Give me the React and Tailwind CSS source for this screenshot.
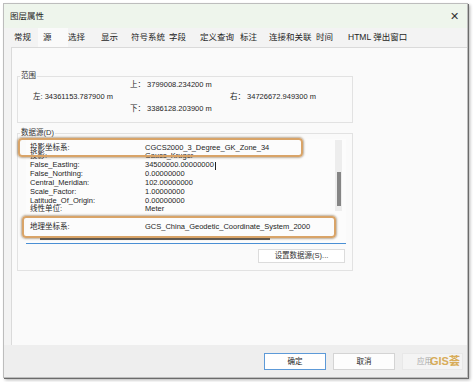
import React from 'react'

export default function App() {
  const tabs = [
    ['常规', 29],
    ['源', 30],
    ['选择', 33],
    ['显示', 30],
    ['符号系统', 38],
    ['字段', 31],
    ['定义查询', 40],
    ['标注', 29],
    ['连接和关联', 47],
    ['时间', 32],
    ['HTML 弹出窗口', 90],
  ]

  const rows = [
    ['投影坐标系:', 'CGCS2000_3_Degree_GK_Zone_34'],
    ['投影:', 'Gauss_Kruger'],
    ['False_Easting:', '34500000.00000000', true],
    ['False_Northing:', '0.00000000'],
    ['Central_Meridian:', '102.00000000'],
    ['Scale_Factor:', '1.00000000'],
    ['Latitude_Of_Origin:', '0.00000000'],
    ['线性单位:', 'Meter'],
    ['', ''],
    ['地理坐标系:', 'GCS_China_Geodetic_Coordinate_System_2000'],
  ]

  return (
    <div
      className="relative w-[474px] h-[382px] overflow-hidden bg-white text-[#1e1e1e]"
      style={{ fontFamily: '"Liberation Sans", "Noto Sans CJK SC", sans-serif' }}
    >
      <div className="ml-[3px] mt-[3px] flex h-[375px] w-[465px] flex-col border border-[#bdbdbd] bg-[#f3f3f3] shadow-[1px_1px_0_#6b6b6b,2px_2px_3px_rgba(0,0,0,0.3)]">
        {/* title bar */}
        <div className="flex h-[24px] items-center justify-between bg-[#eef5ec] pl-[6px] pr-[8px]">
          <span className="text-[8.5px]">图层属性</span>
          <span className="text-[11px] leading-none text-[#333]">✕</span>
        </div>

        {/* tabs */}
        <div className="flex h-[19px] items-center pl-[10px] text-[8.5px]">
          {tabs.map(([t, w]) => (
            <div
              key={t}
              style={{ width: w }}
              className={t === '源' ? 'flex h-full items-center -ml-[5px] pl-[5px] bg-[#fafafa]' : 'flex h-full items-center'}
            >
              {t}
            </div>
          ))}
        </div>

        {/* panel */}
        <div className="ml-[7px] h-[298px] border-l border-t border-[#dadada] bg-[#fafafa] text-[7.5px]">
          {/* 范围 */}
          <div className="ml-[5px] mt-[28px] h-[47px] w-[336px] border border-[#e2e2e2]">
            <span className="-mt-[7px] ml-[2px] block w-fit bg-[#fafafa] px-[1px] leading-[12px] text-[#333]">范围</span>
            <div className="-mt-[3px] leading-[12px]">
              <div className="pl-[112px]">上：&nbsp;3799008.234200 m</div>
              <div className="grid grid-cols-[212px_auto]">
                <span className="pl-[15px]">左:&nbsp;34361153.787900 m</span>
                <span>右：&nbsp;34726672.949300 m</span>
              </div>
              <div className="pl-[112px]">下：&nbsp;3386128.203900 m</div>
            </div>
          </div>

          {/* 数据源 */}
          <div className="ml-[5px] mt-[10px] h-[138px] w-[336px] border border-[#e2e2e2]">
            <span className="-mt-[7px] ml-[2px] block w-fit bg-[#fafafa] px-[1px] leading-[12px] text-[#333]">数据源(D)</span>
            <div className="ml-[8px] flex h-[105px] w-[320px] flex-col border-b-[1.5px] border-[#4a8fd4] bg-[#fcfcfc]">
              <div className="flex h-[97px]">
                <div className="flex-1 pl-[4px] pt-[4.5px]">
                  {rows.map(([k, v, caret], i) => (
                    <div key={i} className="flex h-[8.85px] items-center whitespace-nowrap leading-[8.85px]">
                      <span className="w-[115px]">{k}</span>
                      <span>{v}</span>
                      {caret && <span className="ml-[1px] h-[8px] w-px bg-[#222]" />}
                    </div>
                  ))}
                </div>
                <div className="mr-[4px] mt-[1px] h-[71px] w-[7px] bg-[#ededed]">
                  <div className="ml-[2px] mt-[32px] h-[34px] w-[4px] bg-[#858585]" />
                </div>
              </div>
              <div className="ml-[14px] mt-[1px] h-[3px] w-[230px] bg-[#5e5e5e]" />
            </div>
            <div className="ml-[240px] mt-[5px] flex h-[14px] w-[87px] items-center justify-center border border-[#dcdcdc] bg-white text-[#333]">
              设置数据源(S)...
            </div>
          </div>
        </div>

        {/* footer */}
        <div className="flex h-[32px] justify-end gap-[7px] bg-[#eeeeee] pr-[4px] pt-[8px] text-[7.5px]">
          <div className="flex h-[17px] w-[62px] items-center justify-center border border-[#5d9ad8] bg-white">确定</div>
          <div className="flex h-[17px] w-[62px] items-center justify-center border border-[#d4d4d4] bg-[#fdfdfd]">取消</div>
          <div className="flex h-[17px] w-[61px] items-center justify-start border border-[#e8e8e8] bg-[#f4f4f4] pl-[14px] text-[#a8a8a8]">应用</div>
        </div>
      </div>

      {/* annotation boxes */}
      <div className="absolute left-[18px] top-[138px] h-[19px] w-[285px] rounded-[4px] border-2 border-[#d9a468] shadow-[0_0_2px_1px_rgba(110,80,40,0.45)]" />
      <div className="absolute left-[22px] top-[216px] h-[22px] w-[314px] rounded-[4px] border-2 border-[#d9a468] shadow-[0_0_2px_1px_rgba(110,80,40,0.45)]" />

      {/* watermark */}
      <div className="absolute left-[430px] top-[354px] text-[11px] font-bold leading-[14px] text-[#d6a548] opacity-90">GIS荟</div>
    </div>
  )
}
